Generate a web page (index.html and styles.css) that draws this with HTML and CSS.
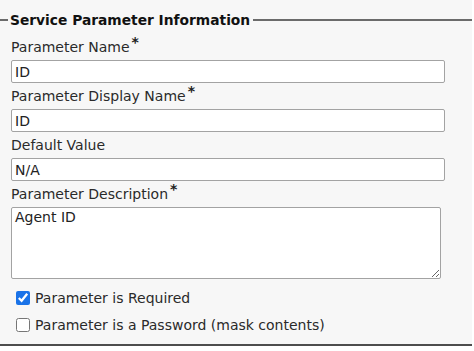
FILE: index.html
```html
<!DOCTYPE html>
<html>
<head>
<meta charset="utf-8">
<link rel="stylesheet" href="styles.css">
</head>
<body>
<div class="panel">
  <div class="legend">
    <span class="legend-line-start"></span>
    <span class="legend-text">Service Parameter Information</span>
    <span class="legend-line-end"></span>
  </div>
  <div class="group">
    <div class="label">Parameter Name<span class="req">*</span></div>
    <input class="field" type="text" value="ID">
  </div>
  <div class="group">
    <div class="label">Parameter Display Name<span class="req">*</span></div>
    <input class="field" type="text" value="ID">
  </div>
  <div class="group">
    <div class="label">Default Value</div>
    <input class="field" type="text" value="N/A">
  </div>
  <div class="group">
    <div class="label">Parameter Description<span class="req">*</span></div>
    <textarea class="area">Agent ID</textarea>
  </div>
  <label class="check-row first"><input type="checkbox" class="cb" checked><span>Parameter is Required</span></label>
  <label class="check-row"><input type="checkbox" class="cb"><span>Parameter is a Password (mask contents)</span></label>
</div>
</body>
</html>
```
FILE: styles.css
```css
html, body {
  margin: 0;
  padding: 0;
  background: #ffffff;
}
body {
  font-family: "DejaVu Sans", Verdana, sans-serif;
  font-size: 14px;
  color: #222;
}
.panel {
  width: 472px;
  height: 346px;
  box-sizing: border-box;
  background: #f7f7f7;
  border-bottom: 2px solid #4d4d4d;
  padding-top: 12px;
}
.legend {
  display: flex;
  align-items: center;
  height: 16px;
  margin-bottom: 9px;
}
.legend-line-start {
  width: 8px;
  height: 2px;
  background: #6b6b6b;
}
.legend-line-end {
  flex: 1;
  height: 2px;
  background: #6b6b6b;
}
.legend-text {
  font-weight: bold;
  font-size: 13.8px;
  padding: 0 3px 0 2px;
  color: #111;
  line-height: 16px;
}
.group {
  padding-left: 11px;
  margin-bottom: 3px;
}
.label {
  height: 20px;
  line-height: 20px;
  margin-bottom: 3px;
  color: #2a2a2a;
}
.req {
  font-weight: bold;
  font-size: 14px;
  position: relative;
  top: -5px;
  margin-left: 2px;
  color: #222;
}
.field {
  display: block;
  box-sizing: border-box;
  width: 434px;
  height: 23px;
  margin: 0;
  border: 1.5px solid #a3a3a3;
  border-radius: 2px;
  background: #fff;
  padding: 0 3px;
  font-family: "DejaVu Sans", Verdana, sans-serif;
  font-size: 14px;
  color: #222;
}
.area {
  display: block;
  box-sizing: border-box;
  width: 430px;
  height: 72px;
  margin: 0;
  border: 1.5px solid #a3a3a3;
  border-radius: 2px;
  background: #fff;
  padding: 1px 3px;
  font-family: "DejaVu Sans", Verdana, sans-serif;
  font-size: 14px;
  color: #222;
  resize: both;
}
.check-row {
  display: flex;
  align-items: center;
  height: 27px;
  padding-left: 16px;
  color: #2a2a2a;
}
.check-row.first {
  margin-top: 5px;
}
.cb {
  width: 14px;
  height: 14px;
  margin: 0 5px 0 0;
  accent-color: #1a73e8;
}
```
